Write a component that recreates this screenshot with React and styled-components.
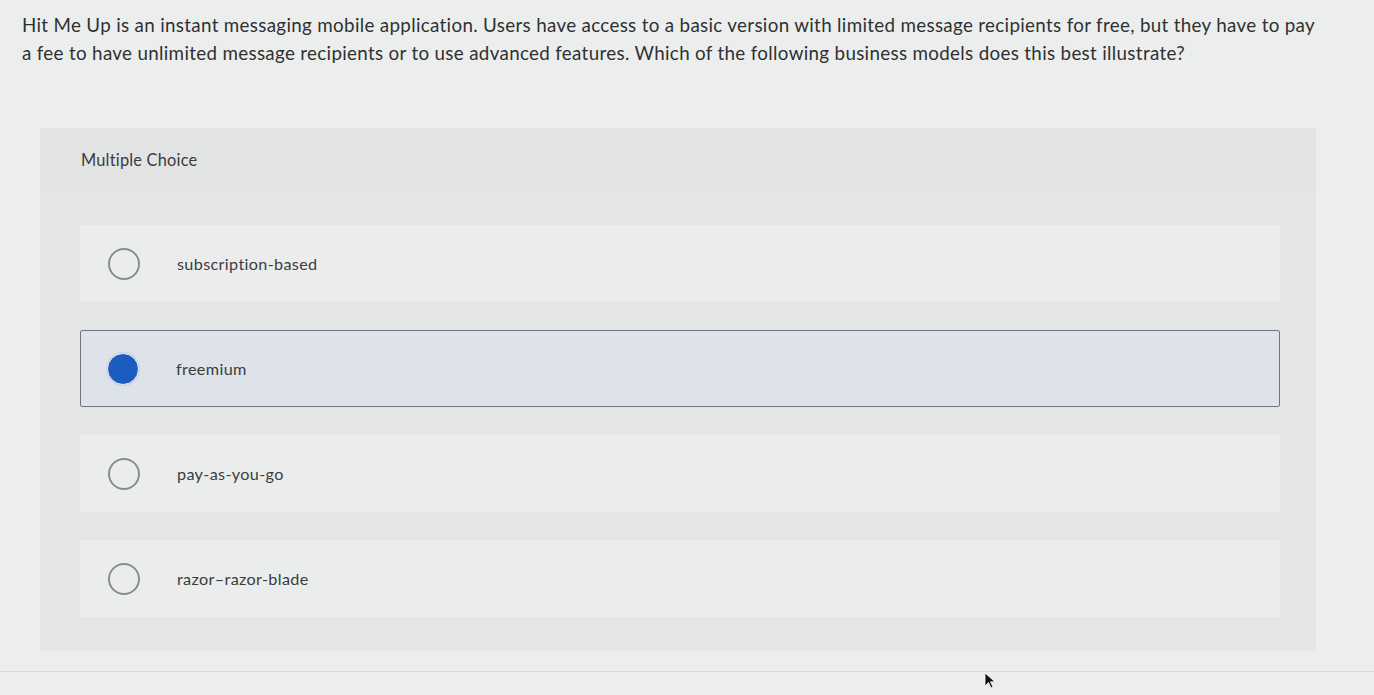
import React from "react";
import styled, { createGlobalStyle } from "styled-components";

const Global = createGlobalStyle`
  html, body {
    margin: 0;
    padding: 0;
    background: #eceeed;
  }
  body {
    font-family: Lato, "Open Sans", sans-serif;
    color: #333;
  }
`;

const Page = styled.div`
  position: relative;
  width: 1374px;
  height: 695px;
  overflow: hidden;
  background: #eceeed;
`;

const Question = styled.p`
  margin: 0;
  padding: 11px 52px 0 22px;
  font-size: 18.8px;
  line-height: 28px;
  color: #2e3133;
  letter-spacing: 0.32px;
`;

const Panel = styled.section`
  margin: 61px 58px 0 40px;
  height: 523px;
  background: #e4e6e5;
  display: flex;
  flex-direction: column;
`;

const Header = styled.div`
  height: 62px;
  display: flex;
  align-items: center;
  padding-left: 41px;
  font-size: 16.4px;
  letter-spacing: 0.2px;
  color: #3a3c3e;
  background: #e2e4e3;
`;

const Options = styled.div`
  display: flex;
  flex-direction: column;
  gap: 28px;
  padding: 35px 36px 0 40px;
`;

const Option = styled.label`
  height: 77px;
  box-sizing: border-box;
  display: flex;
  align-items: center;
  gap: 37px;
  padding-left: ${(p) => (p.$selected ? 26 : 27)}px;
  background: ${(p) => (p.$selected ? "#dde3e9" : "#ebedec")};
  border: 1px solid ${(p) => (p.$selected ? "#6f757c" : "transparent")};
  border-radius: 2px;
  font-size: 16.2px;
  letter-spacing: 0.35px;
  color: #3a3c3e;
  cursor: pointer;
`;

const Radio = styled.span`
  width: 32px;
  height: 32px;
  box-sizing: border-box;
  border-radius: 50%;
  flex: none;
  border: ${(p) => (p.$checked ? "1px solid #f2f4f6" : "2px solid #8a8d90")};
  background: ${(p) => (p.$checked ? "#1c5cc0" : "transparent")};
  box-shadow: ${(p) => (p.$checked ? "0 0 0 1px #c9d2dc" : "none")};
`;

const Rule = styled.div`
  position: absolute;
  left: 0;
  right: 0;
  top: 671px;
  height: 1px;
  background: #d9dcdb;
`;

const Pointer = styled.svg`
  position: absolute;
  left: 984px;
  top: 672px;
`;

const choices = [
  "subscription-based",
  "freemium",
  "pay-as-you-go",
  "razor\u2013razor-blade",
];

export default function App() {
  const selected = 1;
  return (
    <Page>
      <Global />
      <Question>
        Hit Me Up is an instant messaging mobile application. Users have access
        to a basic version with limited message recipients for free, but they
        have to pay a fee to have unlimited message recipients or to use
        advanced features. Which of the following business models does this
        best illustrate?
      </Question>
      <Panel>
        <Header>Multiple Choice</Header>
        <Options>
          {choices.map((c, i) => (
            <Option key={c} $selected={i === selected}>
              <Radio $checked={i === selected} />
              <span>{c}</span>
            </Option>
          ))}
        </Options>
      </Panel>
      <Rule />
      <Pointer width="12" height="18" viewBox="0 0 12 18">
        <path d="M1 1 L1 14 L4.5 10.5 L7 16 L9 15 L6.5 9.8 L11 9.8 Z" fill="#111" stroke="#fff" strokeWidth="0.8" />
      </Pointer>
    </Page>
  );
}
